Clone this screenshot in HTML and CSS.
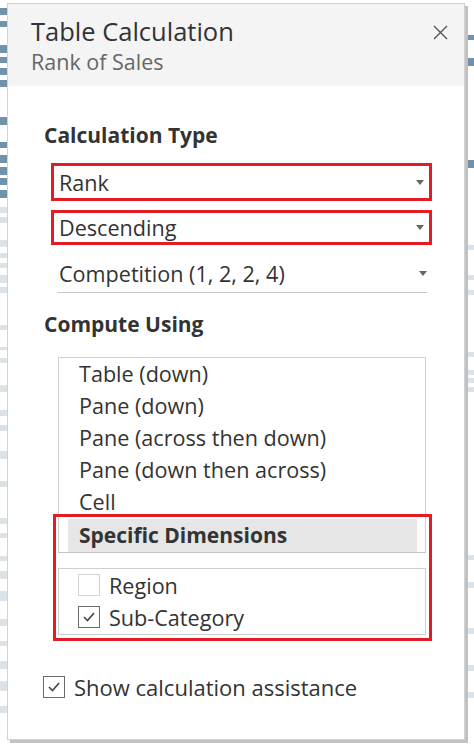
FILE: index.html
```html
<!DOCTYPE html>
<html lang="en">
  <head>
    <meta charset="UTF-8" />
    <title>Table Calculation</title>
    <link rel="stylesheet" href="styles.css">
  </head>
  <body>
    <div class="strip strip-left">
      <i class="bar blue" style="margin-top:8px;height:7px"></i>
      <i class="bar blue" style="margin-top:6px;height:6px"></i>
      <i class="bar blue" style="margin-top:18px;height:8px"></i>
      <i class="bar blue" style="margin-top:4px;height:6px"></i>
      <i class="bar blue" style="margin-top:5px;height:7px"></i>
      <i class="bar blue" style="margin-top:5px;height:7px"></i>
      <i class="bar blue" style="margin-top:30px;height:8px"></i>
      <i class="bar blue" style="margin-top:17px;height:6px"></i>
      <i class="bar blue" style="margin-top:7px;height:8px"></i>
      <i class="bar blue" style="margin-top:4px;height:8px"></i>
      <i class="bar blue" style="margin-top:3px;height:7px"></i>
      <i class="bar blue" style="margin-top:5px;height:8px"></i>
      <i class="bar light" style="margin-top:9px;height:6px"></i>
      <i class="bar light" style="margin-top:4px;height:6px"></i>
      <i class="bar light" style="margin-top:17px;height:7px"></i>
      <i class="bar light" style="margin-top:6px;height:5px"></i>
      <i class="bar light" style="margin-top:5px;height:5px"></i>
      <i class="bar light" style="margin-top:7px;height:8px"></i>
      <i class="bar light" style="margin-top:4px;height:6px"></i>
      <i class="bar light" style="margin-top:32px;height:5px"></i>
      <i class="bar light" style="margin-top:17px;height:3px"></i>
      <i class="bar light" style="margin-top:8px;height:5px"></i>
      <i class="bar light" style="margin-top:22px;height:7px"></i>
      <i class="bar light" style="margin-top:18px;height:6px"></i>
      <i class="bar light" style="margin-top:9px;height:6px"></i>
      <i class="bar light" style="margin-top:20px;height:8px"></i>
      <i class="bar light" style="margin-top:22px;height:6px"></i>
      <i class="bar light" style="margin-top:31px;height:6px"></i>
      <i class="bar light" style="margin-top:9px;height:5px"></i>
      <i class="bar light" style="margin-top:18px;height:5px"></i>
      <i class="bar light" style="margin-top:10px;height:8px"></i>
      <i class="bar light" style="margin-top:12px;height:10px"></i>
      <i class="bar light" style="margin-top:18px;height:7px"></i>
      <i class="bar light" style="margin-top:15px;height:5px"></i>
      <i class="bar light" style="margin-top:15px;height:8px"></i>
      <i class="bar light" style="margin-top:12px;height:10px"></i>
      <i class="bar light" style="margin-top:15px;height:7px"></i>
    </div>

    <div class="dialog">
      <div class="dialog-head">
        <div class="titles">
          <h1>Table Calculation</h1>
          <p class="subtitle">Rank of Sales</p>
        </div>
        <button class="close" aria-label="Close">
          <svg width="15" height="15" viewBox="0 0 15 15">
            <path d="M1 1 L14 14 M14 1 L1 14" stroke="#555" stroke-width="1.4" fill="none" />
          </svg>
        </button>
      </div>

      <div class="dialog-body">
        <h2 class="section-title">Calculation Type</h2>

        <div class="select marked first">
          <span>Rank</span>
          <i class="caret"></i>
        </div>
        <div class="select marked second">
          <span>Descending</span>
          <i class="caret"></i>
        </div>
        <div class="select plain">
          <span>Competition (1, 2, 2, 4)</span>
          <i class="caret"></i>
        </div>

        <h2 class="section-title compute-title">Compute Using</h2>

        <div class="compute">
          <ul class="listbox">
            <li>Table (down)</li>
            <li>Pane (down)</li>
            <li>Pane (across then down)</li>
            <li>Pane (down then across)</li>
            <li>Cell</li>
            <li class="selected">Specific Dimensions</li>
          </ul>

          <div class="dims">
            <label class="check-row">
              <span class="box"></span>
              Region
            </label>
            <label class="check-row">
              <span class="box checked">
                <svg width="14" height="12" viewBox="0 0 14 12">
                  <path d="M2 6 L5.5 9.5 L12 2" stroke="#444" stroke-width="1.6" fill="none" />
                </svg>
              </span>
              Sub-Category
            </label>
          </div>

          <div class="mark"></div>
        </div>

        <label class="check-row assist">
          <span class="box checked">
            <svg width="14" height="12" viewBox="0 0 14 12">
              <path d="M2 6 L5.5 9.5 L12 2" stroke="#444" stroke-width="1.6" fill="none" />
            </svg>
          </span>
          Show calculation assistance
        </label>
      </div>
    </div>

    <div class="strip strip-right">
      <i class="bar blue" style="margin-top:35px;height:5px"></i>
      <i class="bar blue" style="margin-top:18px;height:8px"></i>
      <i class="bar blue" style="margin-top:94px;height:8px"></i>
      <i class="bar light" style="margin-top:77px;height:5px"></i>
      <i class="bar light" style="margin-top:25px;height:5px"></i>
      <i class="bar light" style="margin-top:10px;height:5px"></i>
      <i class="bar light" style="margin-top:57px;height:5px"></i>
      <i class="bar light" style="margin-top:13px;height:5px"></i>
      <i class="bar light" style="margin-top:3px;height:5px"></i>
      <i class="bar light" style="margin-top:4px;height:5px"></i>
      <i class="bar light" style="margin-top:163px;height:5px"></i>
      <i class="bar light" style="margin-top:22px;height:6px"></i>
      <i class="bar light" style="margin-top:40px;height:6px"></i>
      <i class="bar light" style="margin-top:31px;height:6px"></i>
      <i class="bar light" style="margin-top:21px;height:6px"></i>
    </div>
  </body>
</html>
```

FILE: styles.css
```css
/* Global styles */
* {
  box-sizing: border-box;
  margin: 0;
  padding: 0;
}

body {
  display: flex;
  align-items: flex-start;
  width: 474px;
  height: 750px;
  overflow: hidden;
  background-color: #ffffff;
  font-family: "Open Sans", "Noto Sans", sans-serif;
  color: #333;
}

/* blurred viz behind the dialog */
.strip {
  display: flex;
  flex-direction: column;
  flex: none;
  height: 750px;
}

.strip-left {
  width: 7px;
}

.strip-right {
  width: 6px;
  margin-left: 3px;
}

.bar {
  display: block;
  flex: none;
  width: 100%;
}

.bar.blue {
  background-color: #7193a9;
}

.bar.light {
  background-color: #dce3e8;
}

/* dialog */
.dialog {
  flex: none;
  width: 458px;
  height: 737px;
  margin-top: 3px;
  background: white;
  border: 1px solid #d2d2d2;
  box-shadow: 3px 3px 0 #c2c2c2;
}

.dialog-head {
  display: flex;
  justify-content: space-between;
  height: 82px;
  padding: 11px 16px 0 23px;
  background-color: #f4f4f4;
}

.dialog-head h1 {
  font-size: 25.5px;
  font-weight: 400;
  line-height: 32px;
  color: #333;
}

.subtitle {
  font-size: 21.5px;
  line-height: 30px;
  color: #666;
}

.close {
  width: 15px;
  height: 15px;
  margin-top: 10px;
  border: none;
  background: none;
}

.close svg {
  display: block;
}

.dialog-body {
  padding: 35px 32px 0 36px;
}

.section-title {
  font-size: 21px;
  font-weight: 700;
  line-height: 28px;
  color: #333;
}

/* dropdowns */
.select {
  display: flex;
  align-items: center;
  justify-content: space-between;
  font-size: 21.6px;
  color: #333;
}

.select.marked {
  margin-left: 7px;
  padding: 0 5px 0 5px;
  border: 3px solid #e31b23;
}

.select.first {
  height: 38px;
  margin-top: 14px;
}

.select.second {
  height: 35px;
  margin-top: 9px;
}

.select.plain {
  height: 35px;
  margin: 13px 5px 0 13px;
  padding: 0 0 3px 2px;
  border-bottom: 1px solid #c8c8c8;
}

.caret {
  width: 0;
  height: 0;
  border-left: 4px solid transparent;
  border-right: 4px solid transparent;
  border-top: 5px solid #666;
}

.compute-title {
  margin-top: 17px;
}

/* compute using list */
.compute {
  position: relative;
  margin: 19px 6px 0 14px;
}

.listbox {
  list-style: none;
  border: 1px solid #cfcfcf;
  border-bottom-color: #c4c4c4;
  padding: 0 8px 0 9px;
}

.listbox li {
  font-size: 21.6px;
  line-height: 32px;
  padding-left: 11px;
  color: #333;
}

.listbox li.selected {
  margin-top: 1px;
  height: 33px;
  background-color: #e6e6e6;
  font-weight: 700;
  font-size: 21px;
}

.dims {
  margin-top: 15px;
  border: 1px solid #cfcfcf;
  padding: 0 0 1px 19px;
}

.check-row {
  display: flex;
  align-items: center;
  gap: 9px;
  height: 32px;
  font-size: 21.6px;
  color: #333;
}

.box {
  display: flex;
  align-items: center;
  justify-content: center;
  width: 22px;
  height: 22px;
  border: 1px solid #d4d4d4;
  background: white;
}

.box.checked {
  border-color: #6a6a6a;
}

.box svg {
  display: block;
}

/* red annotation frame */
.mark {
  position: absolute;
  left: -5px;
  right: -6px;
  top: 157px;
  height: 127px;
  border: 3px solid #e31b23;
}

.assist {
  margin-top: 36px;
  margin-left: -1px;
  font-size: 22px;
}
```
